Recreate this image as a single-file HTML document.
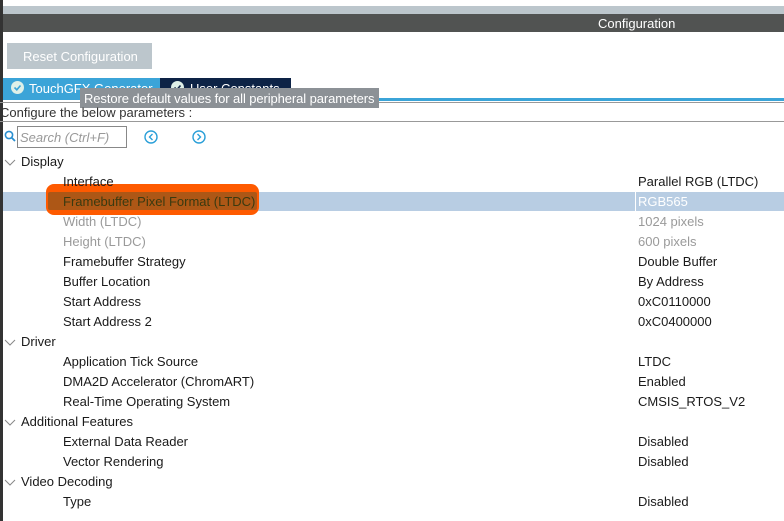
<!DOCTYPE html>
<html><head><style>
body{margin:0;width:784px;height:521px;overflow:hidden;background:#fff;position:relative;font-family:"Liberation Sans",sans-serif;font-size:13px;color:#1a1a1a}
div{position:absolute;box-sizing:border-box}
.t{white-space:nowrap;line-height:20px;margin-top:1px}
.g{color:#9a9a9a}
</style></head><body>
<div style="left:0;top:0;width:3px;height:521px;background:#333"></div>
<div style="left:3px;top:6px;width:781px;height:8px;background:#bcc6cc"></div>
<div style="left:3px;top:14px;width:781px;height:18px;background:#515352"></div>
<div class="t" style="left:598px;top:13px;color:#fff;font-size:13px">Configuration</div>
<div style="left:7px;top:43px;width:145px;height:26px;background:#bcc6cc"></div>
<div class="t" style="left:23px;top:46px;color:#fff;font-size:13px">Reset Configuration</div>
<div style="left:3px;top:78px;width:157px;height:22px;background:#3ba4d8"></div>
<div style="left:160px;top:78px;width:131px;height:22px;background:#0d2346"></div>
<svg style="position:absolute;left:11px;top:81px" width="13" height="13"><circle cx="6.5" cy="6.5" r="6.5" fill="#dff0e8"/><path d="M3.5 6.5 L5.8 8.8 L9.5 4.5" fill="none" stroke="#3ba4d8" stroke-width="1.6"/></svg>
<svg style="position:absolute;left:171px;top:81px" width="13" height="13"><circle cx="6.5" cy="6.5" r="6.5" fill="#dff0e8"/><path d="M3.5 6.5 L5.8 8.8 L9.5 4.5" fill="none" stroke="#0d2346" stroke-width="1.6"/></svg>
<div class="t" style="left:29px;top:78px;color:#fff">TouchGFX Generator</div>
<div class="t" style="left:190px;top:78px;color:#fff">User Constants</div>
<div style="left:379px;top:98px;width:405px;height:3px;background:#3ba4d8"></div>
<div style="left:0;top:102px;width:784px;height:1px;background:#999"></div>
<div style="left:80px;top:88px;width:299px;height:20px;background:#8c9196"></div>
<div class="t" style="left:84px;top:88px;color:#fff;letter-spacing:-0.1px">Restore default values for all peripheral parameters</div>
<div class="t" style="left:0;top:102px;color:#333">Configure the below parameters :</div>
<div style="left:0;top:121px;width:784px;height:1px;background:#999"></div>
<svg style="position:absolute;left:4px;top:130px" width="13" height="13"><circle cx="5" cy="5" r="3.6" fill="none" stroke="#2a8fd0" stroke-width="1.6"/><line x1="7.6" y1="7.6" x2="11" y2="11" stroke="#2a8fd0" stroke-width="1.8"/></svg>
<div style="left:17px;top:126px;width:110px;height:22px;border:1px solid #888"></div>
<div class="t" style="left:20px;top:127px;color:#999;font-style:italic">Search (Ctrl+F)</div>
<svg style="position:absolute;left:143px;top:129px" width="16" height="16"><circle cx="8" cy="8" r="6" fill="none" stroke="#2a9fd8" stroke-width="1.4"/><path d="M9.5 5 L6.5 8 L9.5 11" fill="none" stroke="#2a9fd8" stroke-width="1.4"/></svg>
<svg style="position:absolute;left:191px;top:129px" width="16" height="16"><circle cx="8" cy="8" r="6" fill="none" stroke="#2a9fd8" stroke-width="1.4"/><path d="M6.5 5 L9.5 8 L6.5 11" fill="none" stroke="#2a9fd8" stroke-width="1.4"/></svg>
<div style="left:3px;top:192px;width:781px;height:19px;background:#b8cde3"></div>
<div style="left:635px;top:192px;width:1px;height:19px;background:#fff"></div>
<div style="left:46px;top:184px;width:213px;height:31px;background:#fe5a00;border-radius:8px"></div>
<div style="left:48px;top:192px;width:209px;height:18px;background:#ad5716;border-radius:2px"></div>
<svg style="position:absolute;left:4px;top:156px" width="12" height="360" fill="none" stroke="#888" stroke-width="1"><path d="M1 4 L6 9 L11 4"/><path d="M1 184 L6 189 L11 184"/><path d="M1 264 L6 269 L11 264"/><path d="M1 324 L6 329 L11 324"/></svg>
<div class="t" style="left:21px;top:151px">Display</div>
<div class="t" style="left:63px;top:171px">Interface</div><div class="t" style="left:638px;top:171px">Parallel RGB (LTDC)</div>
<div class="t" style="left:63px;top:191px;color:#3a3a10">Framebuffer Pixel Format (LTDC)</div><div class="t" style="left:638px;top:191px;color:#fff">RGB565</div>
<div class="t g" style="left:63px;top:211px">Width (LTDC)</div><div class="t g" style="left:638px;top:211px">1024 pixels</div>
<div class="t g" style="left:63px;top:231px">Height (LTDC)</div><div class="t g" style="left:638px;top:231px">600 pixels</div>
<div class="t" style="left:63px;top:251px">Framebuffer Strategy</div><div class="t" style="left:638px;top:251px">Double Buffer</div>
<div class="t" style="left:63px;top:271px">Buffer Location</div><div class="t" style="left:638px;top:271px">By Address</div>
<div class="t" style="left:63px;top:291px">Start Address</div><div class="t" style="left:638px;top:291px">0xC0110000</div>
<div class="t" style="left:63px;top:311px">Start Address 2</div><div class="t" style="left:638px;top:311px">0xC0400000</div>
<div class="t" style="left:21px;top:331px">Driver</div>
<div class="t" style="left:63px;top:351px">Application Tick Source</div><div class="t" style="left:638px;top:351px">LTDC</div>
<div class="t" style="left:63px;top:371px">DMA2D Accelerator (ChromART)</div><div class="t" style="left:638px;top:371px">Enabled</div>
<div class="t" style="left:63px;top:391px">Real-Time Operating System</div><div class="t" style="left:638px;top:391px">CMSIS_RTOS_V2</div>
<div class="t" style="left:21px;top:411px">Additional Features</div>
<div class="t" style="left:63px;top:431px">External Data Reader</div><div class="t" style="left:638px;top:431px">Disabled</div>
<div class="t" style="left:63px;top:451px">Vector Rendering</div><div class="t" style="left:638px;top:451px">Disabled</div>
<div class="t" style="left:21px;top:471px">Video Decoding</div>
<div class="t" style="left:63px;top:491px">Type</div><div class="t" style="left:638px;top:491px">Disabled</div>
</body></html>
